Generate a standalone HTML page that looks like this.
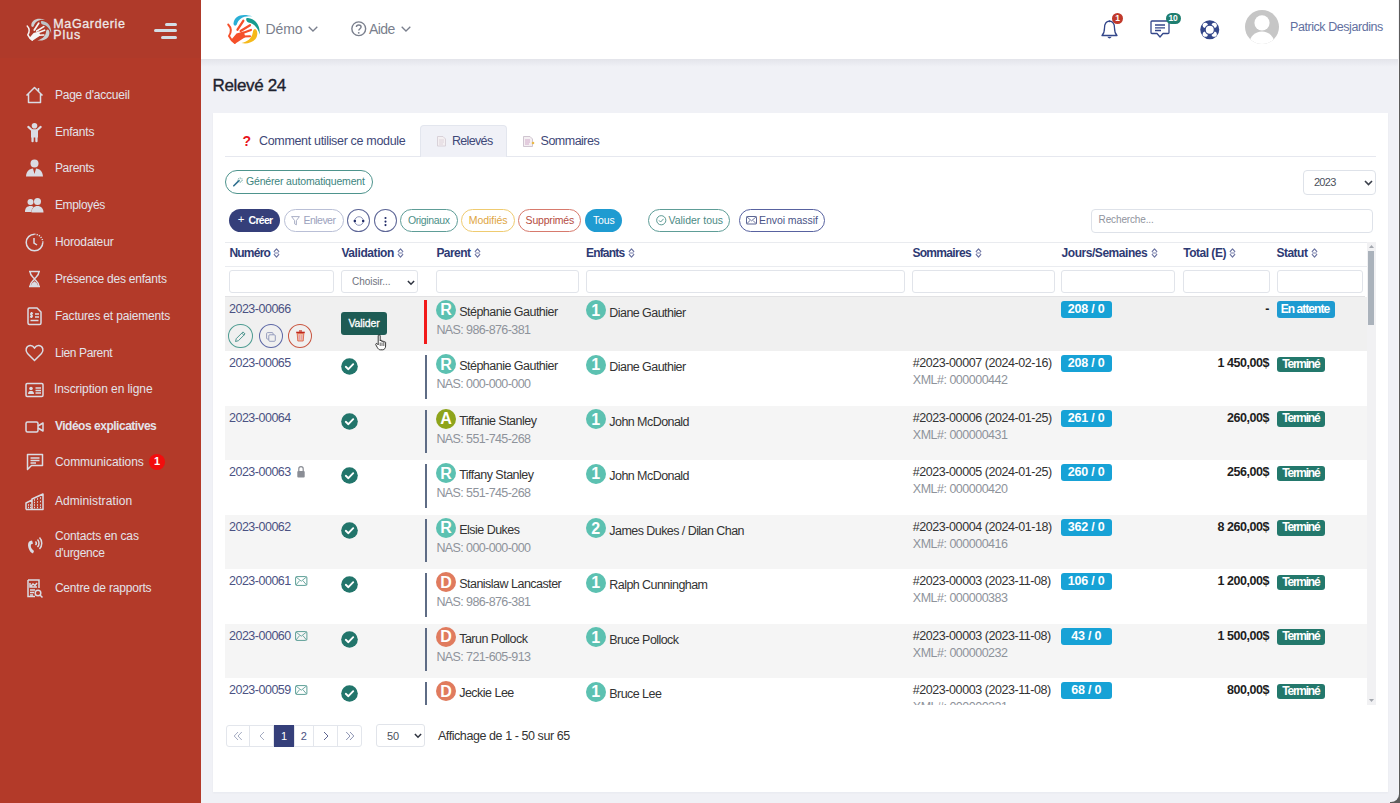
<!DOCTYPE html><html><head><meta charset="utf-8"><style>
html,body{margin:0;padding:0;}
body{width:1400px;height:803px;overflow:hidden;position:relative;background:#F0F1F6;font-family:"Liberation Sans", sans-serif;}
.t{position:absolute;white-space:nowrap;}
.b{position:absolute;box-sizing:border-box;}
svg.b{overflow:visible;}
</style></head><body>
<div class="b" style="left:0.00px;top:0.00px;width:201.00px;height:803.00px;background:#B33A29;"></div>
<div class="b" style="left:0.00px;top:0.00px;width:201.00px;height:58.00px;background:#AF3A2A;"></div>
<svg class="b" style="left:24.10px;top:14.50px" width="30.5" height="27.5"><g transform="scale(0.763)">
<path d="M9.5 13.5 C10 6 18 2.8 28.5 6.5 C20 5.2 14.5 8.5 12.8 14.5 C12 16.3 9.5 16 9.5 13.5 Z" fill="#CDD0D2"/>
<path d="M22.2 9.5 C21.8 8.3 23 7.8 24 8 C31 8.8 36.5 15 35.6 24.5 C34.5 18.5 30 13.5 24.5 12.5 C23 12.2 22.4 10.8 22.2 9.5 Z" fill="#BCC3C6"/>
<path d="M31 19 C33.5 19.5 34.5 25 31.5 29 C28 33 22 34.2 17.5 33 C23 32 27.8 28.5 28.8 22.5 C29 20.5 29.8 19 31 19 Z" fill="#CDD0D2"/>
<g stroke="#F6F6F6" stroke-linecap="round" fill="none"><path d="M13.5 19.7 L19.3 10.8" stroke-width="2.3"/><path d="M16.6 21 L26 15.2" stroke-width="2.2"/><path d="M18 23.2 L27 19.9" stroke-width="2.1"/><path d="M18.8 26.6 L26 26.2" stroke-width="2"/><path d="M4.2 14.5 C7.5 18 7.5 22 5 26 C6.5 29 8.5 31.5 10.8 33" stroke-width="1.9"/></g>
<path d="M12.5 23.5 L19.5 21.5 L21.5 27 L11 33.8 L7 30 Z" fill="#F6F6F6"/>
</g></svg>
<div class="t" style="left:53.30px;top:18.02px;font-size:12.5px;line-height:12.5px;color:#EEE8E8;font-weight:400;letter-spacing:0.628px;-webkit-text-stroke:0.3px #EEE8E8;">MaGarderie</div>
<div class="t" style="left:53.30px;top:28.72px;font-size:12.5px;line-height:12.5px;color:#EEE8E8;font-weight:400;letter-spacing:0.878px;-webkit-text-stroke:0.3px #EEE8E8;">Plus</div>
<div class="b" style="left:165.00px;top:22.50px;width:11.50px;height:3.00px;background:#D3DEE6;border-radius:2px;"></div>
<div class="b" style="left:154.00px;top:29.00px;width:22.50px;height:3.00px;background:#D3DEE6;border-radius:2px;"></div>
<div class="b" style="left:160.50px;top:36.00px;width:16.00px;height:3.00px;background:#D3DEE6;border-radius:2px;"></div>
<div class="t" style="left:54.90px;top:88.64px;font-size:12px;line-height:12px;color:#E3E3EA;font-weight:400;letter-spacing:-0.209px;">Page d'accueil</div>
<div class="t" style="left:54.90px;top:125.54px;font-size:12px;line-height:12px;color:#E3E3EA;font-weight:400;letter-spacing:-0.182px;">Enfants</div>
<div class="t" style="left:54.90px;top:162.14px;font-size:12px;line-height:12px;color:#E3E3EA;font-weight:400;letter-spacing:-0.293px;">Parents</div>
<div class="t" style="left:54.90px;top:199.04px;font-size:12px;line-height:12px;color:#E3E3EA;font-weight:400;letter-spacing:-0.327px;">Employés</div>
<div class="t" style="left:54.90px;top:236.14px;font-size:12px;line-height:12px;color:#E3E3EA;font-weight:400;letter-spacing:-0.138px;">Horodateur</div>
<div class="t" style="left:54.90px;top:273.14px;font-size:12px;line-height:12px;color:#E3E3EA;font-weight:400;letter-spacing:-0.214px;">Présence des enfants</div>
<div class="t" style="left:54.90px;top:310.14px;font-size:12px;line-height:12px;color:#E3E3EA;font-weight:400;letter-spacing:-0.171px;">Factures et paiements</div>
<div class="t" style="left:54.90px;top:346.74px;font-size:12px;line-height:12px;color:#E3E3EA;font-weight:400;letter-spacing:-0.374px;">Lien Parent</div>
<div class="t" style="left:53.90px;top:383.44px;font-size:12px;line-height:12px;color:#E3E3EA;font-weight:400;letter-spacing:-0.073px;">Inscription en ligne</div>
<div class="t" style="left:54.90px;top:420.44px;font-size:12px;line-height:12px;color:#E3E3EA;font-weight:700;letter-spacing:-0.48px;">Vidéos explicatives</div>
<div class="t" style="left:54.90px;top:455.64px;font-size:12px;line-height:12px;color:#E3E3EA;font-weight:400;letter-spacing:-0.036px;">Communications</div>
<div class="t" style="left:54.90px;top:495.24px;font-size:12px;line-height:12px;color:#E3E3EA;font-weight:400;letter-spacing:0.088px;">Administration</div>
<div class="t" style="left:54.90px;top:529.84px;font-size:12px;line-height:12px;color:#E3E3EA;font-weight:400;letter-spacing:-0.146px;">Contacts en cas</div>
<div class="t" style="left:54.90px;top:582.14px;font-size:12px;line-height:12px;color:#E3E3EA;font-weight:400;letter-spacing:-0.197px;">Centre de rapports</div>
<div class="t" style="left:54.90px;top:547.24px;font-size:12px;line-height:12px;color:#E3E3EA;font-weight:400;letter-spacing:-0.295px;">d'urgence</div>
<div class="b" style="left:149.00px;top:453.50px;width:16.00px;height:16.00px;background:#F20D0D;border-radius:50%;"></div>
<div class="t" style="left:149.00px;top:456.19px;font-size:11px;line-height:11px;color:#fff;font-weight:700;letter-spacing:0px;width:16px;text-align:center;">1</div>
<svg class="b" style="left:25.00px;top:85.50px;" width="19" height="18" viewBox="0 0 19 18"><path d="M1.5 9.5 L9.5 1.5 L17.5 9.5 M3.5 8 V16.5 H15.5 V8" stroke="#DADCE4" fill="none" stroke-width="1.5" stroke-linejoin="round"/><path d="M13.5 2 V5" stroke="#DADCE4" fill="none" stroke-width="1.5"/></svg>
<svg class="b" style="left:25.00px;top:121.50px;" width="19" height="22" viewBox="0 0 19 22"><circle cx="9.5" cy="3.7" r="2.8" fill="#DADCE4"/><path d="M3.3 4.9 L7 8.2 M15.7 4.9 L12 8.2" stroke="#DADCE4" stroke-width="2.1" stroke-linecap="round"/><path d="M6 7.2 H13 V15 Q13 15.8 12.6 15.8 V19.2 Q12.6 20.2 11.5 20.2 Q10.3 20.2 10.3 19.2 V15.6 H8.7 V19.2 Q8.7 20.2 7.5 20.2 Q6.4 20.2 6.4 19.2 V15.8 Q6 15.8 6 15 Z" fill="#DADCE4"/></svg>
<svg class="b" style="left:25.00px;top:159.00px;" width="19" height="18" viewBox="0 0 19 18"><circle cx="9.5" cy="4.5" r="4" fill="#DADCE4"/><path d="M1 17.5 C1.5 12 4 10 8 9.5 L9.5 15 L11 9.5 C15 10 17.5 12 18 17.5 Z" fill="#DADCE4"/></svg>
<svg class="b" style="left:25.00px;top:196.00px;" width="19" height="18" viewBox="0 0 19 18"><circle cx="5.5" cy="6" r="3" fill="#DADCE4"/><circle cx="12.5" cy="5.5" r="3.5" fill="#DADCE4"/><path d="M0 16 C0 12 2 10 5.5 10 C7 10 8 10.5 8.5 11 C7 12.5 6.5 14 6.5 16 Z" fill="#DADCE4"/><path d="M6.5 16.5 C6.5 12.5 9 10 12.5 10 C16 10 18.5 12.5 18.5 16.5 Z" fill="#DADCE4"/></svg>
<svg class="b" style="left:25.00px;top:233.00px;" width="19" height="19" viewBox="0 0 19 19"><path d="M9.5 1.2 A8.3 8.3 0 1 0 17.8 9.5" stroke="#DADCE4" fill="none" stroke-width="1.5"/><path d="M17.8 9.5 A8.3 8.3 0 0 0 9.5 1.2" stroke="#DADCE4" fill="none" stroke-width="1.5" stroke-dasharray="1.2 1.2"/><path d="M9 5 V10 L12 12" stroke="#DADCE4" fill="none" stroke-width="1.5"/></svg>
<svg class="b" style="left:27.00px;top:270.00px;" width="15" height="18" viewBox="0 0 15 18"><path d="M2 1.5 H13 M2 16.5 H13 M3 1.5 C3 6 7 7.5 7.5 9 C7 10.5 3 12 3 16.5 M12 1.5 C12 6 8 7.5 7.5 9 C8 10.5 12 12 12 16.5" stroke="#DADCE4" fill="none" stroke-width="1.5"/><path d="M4 16 C4 13 7.5 12 7.5 11 C7.5 12 11 13 11 16 Z" fill="#DADCE4"/></svg>
<svg class="b" style="left:26.00px;top:307.00px;" width="17" height="18" viewBox="0 0 17 18"><path d="M2.5 1 H11 L15 5 V16 A1.5 1.5 0 0 1 13.5 17.5 H3.5 A1.5 1.5 0 0 1 2 16 V2.5 A1.5 1.5 0 0 1 3.5 1 Z" stroke="#DADCE4" fill="none" stroke-width="1.5"/><path d="M9 7 H13 M9 10 H13 M4.5 13.5 H12.5 M5.5 5 V11 M7 6.5 C5 5.5 4 7 5.5 8 C7 9 6 10.5 4 9.5" stroke="#DADCE4" fill="none" stroke-width="1.5" stroke-width="1.1"/></svg>
<svg class="b" style="left:25.00px;top:343.50px;" width="19" height="18" viewBox="0 0 19 18"><path d="M9.5 16.5 L2.5 9.5 C0 7 0.8 2 5 1.5 C7 1.3 8.5 2.5 9.5 4 C10.5 2.5 12 1.3 14 1.5 C18.2 2 19 7 16.5 9.5 Z" stroke="#DADCE4" fill="none" stroke-width="1.5"/></svg>
<svg class="b" style="left:25.00px;top:381.50px;" width="19" height="16" viewBox="0 0 19 16"><rect x="1" y="1.5" width="17" height="13" rx="1.2" stroke="#DADCE4" fill="none" stroke-width="1.5"/><circle cx="6" cy="6.5" r="1.8" fill="#DADCE4"/><path d="M3 12 C3 9.5 4.5 9 6 9 C7.5 9 9 9.5 9 12 Z" fill="#DADCE4"/><path d="M10.5 6 H16 M10.5 8.5 H16 M10.5 11 H16" stroke="#DADCE4" fill="none" stroke-width="1.5" stroke-width="1.2"/></svg>
<svg class="b" style="left:25.00px;top:418.50px;" width="19" height="16" viewBox="0 0 19 16"><rect x="1" y="3" width="12" height="10" rx="1.5" stroke="#DADCE4" fill="none" stroke-width="1.5"/><path d="M13 7 L18 4 V12 L13 9" stroke="#DADCE4" fill="none" stroke-width="1.5" stroke-linejoin="round"/></svg>
<svg class="b" style="left:26.00px;top:452.50px;" width="18" height="19" viewBox="0 0 18 19"><path d="M1.5 1.5 H16.5 V12.5 H5.5 L1.5 16.5 Z" stroke="#DADCE4" fill="none" stroke-width="1.5" stroke-linejoin="round"/><path d="M4.5 5 H13.5 M4.5 7.5 H13.5 M4.5 10 H10" stroke="#DADCE4" fill="none" stroke-width="1.5" stroke-width="1.2"/></svg>
<svg class="b" style="left:25.00px;top:492.00px;" width="19" height="19" viewBox="0 0 19 19"><path d="M1 17.5 V11 L7 8 V17.5 M7 17.5 V7 L18 2 V17.5 H1" stroke="#DADCE4" fill="none" stroke-width="1.5" stroke-linejoin="round"/><path d="M9 8 H10 M12 7 H13 M15 6 H16 M9 10.5 H10 M12 10 H13 M15 9.5 H16 M9 13 H10 M12 13 H13 M15 13 H16 M9 15.5 H10 M12 15.5 H13 M15 15.5 H16 M3 13 H4 M5 13 H6 M3 15.5 H4 M5 15.5 H6" stroke="#DADCE4" fill="none" stroke-width="1.5" stroke-width="1.3"/></svg>
<svg class="b" style="left:25.00px;top:536.00px;" width="19" height="19" viewBox="0 0 19 19"><path d="M5 5 C3 6 2.5 9 3.5 12 C4.5 15 6 17 8 17.5 L9 15 L7 13 C6 12 5.5 10 6 8.5 L8 7.5 L7 4.5 Z" fill="#DADCE4"/><path d="M10.5 5.5 C11.5 6.5 11.5 8 10.5 9 M12.5 3.5 C14.5 5.5 14.5 9 12.5 11 M14.5 1.5 C17.5 4.5 17.5 10 14.5 13" stroke="#DADCE4" fill="none" stroke-width="1.5" stroke-width="1.2"/></svg>
<svg class="b" style="left:26.00px;top:579.00px;" width="18" height="19" viewBox="0 0 18 19"><path d="M2 1 H13 V9 M2 1 V17.5 H9" stroke="#DADCE4" fill="none" stroke-width="1.5"/><path d="M4 4 V8 H11 M5 7 L7 5 L9 6.5 L11 4" stroke="#DADCE4" fill="none" stroke-width="1.5" stroke-width="1.1"/><path d="M4 11 H9 M4 13.5 H8 M4 16 H7" stroke="#DADCE4" fill="none" stroke-width="1.5" stroke-width="1.1"/><circle cx="12" cy="14" r="2.8" stroke="#DADCE4" fill="none" stroke-width="1.5"/><path d="M14 16 L16.5 18.5" stroke="#DADCE4" fill="none" stroke-width="1.5"/></svg>
<div class="b" style="left:201.00px;top:0.00px;width:1197.00px;height:59.00px;background:#fff;"></div>
<div class="b" style="left:201.00px;top:59.00px;width:1197.00px;height:8.00px;background:linear-gradient(#E3E4EA,#F0F1F6);"></div>
<div class="b" style="left:1398.00px;top:0.00px;width:1.00px;height:803.00px;background:#F4F4F6;"></div>
<div class="b" style="left:1399.00px;top:0.00px;width:1.00px;height:803.00px;background:#5B5B5B;"></div>
<div class="b" style="left:1390.00px;top:794.00px;width:10.00px;height:9.00px;background:#5B5B5B;"></div>
<div class="b" style="left:1389.50px;top:791.60px;width:9.50px;height:10.40px;background:#F0F1F6;border-bottom-right-radius:8px;"></div>
<svg class="b" style="left:224.00px;top:10.00px" width="40.0" height="36.0"><g transform="scale(1.0)">
<path d="M9.5 13.5 C10 6 18 2.8 28.5 6.5 C20 5.2 14.5 8.5 12.8 14.5 C12 16.3 9.5 16 9.5 13.5 Z" fill="#2AAFD6"/>
<path d="M22.2 9.5 C21.8 8.3 23 7.8 24 8 C31 8.8 36.5 15 35.6 24.5 C34.5 18.5 30 13.5 24.5 12.5 C23 12.2 22.4 10.8 22.2 9.5 Z" fill="#169C8F"/>
<path d="M31 19 C33.5 19.5 34.5 25 31.5 29 C28 33 22 34.2 17.5 33 C23 32 27.8 28.5 28.8 22.5 C29 20.5 29.8 19 31 19 Z" fill="#F5B91A"/>
<g stroke="#F5502A" stroke-linecap="round" fill="none"><path d="M13.5 19.7 L19.3 10.8" stroke-width="2.3"/><path d="M16.6 21 L26 15.2" stroke-width="2.2"/><path d="M18 23.2 L27 19.9" stroke-width="2.1"/><path d="M18.8 26.6 L26 26.2" stroke-width="2"/><path d="M4.2 14.5 C7.5 18 7.5 22 5 26 C6.5 29 8.5 31.5 10.8 33" stroke-width="1.9"/></g>
<path d="M12.5 23.5 L19.5 21.5 L21.5 27 L11 33.8 L7 30 Z" fill="#F5502A"/>
</g></svg>
<div class="t" style="left:265.60px;top:22.35px;font-size:14px;line-height:14px;color:#7A7F8D;font-weight:400;letter-spacing:-0.12px;">Démo</div>
<svg class="b" style="left:308.00px;top:25.50px;" width="10" height="6" viewBox="0 0 10 6"><path d="M0.7 0.7 L5 5 L9.3 0.7" stroke="#7A7F8D" stroke-width="1.3" fill="none"/></svg>
<svg class="b" style="left:351.00px;top:20.50px;" width="15.5" height="15.5" viewBox="0 0 15.5 15.5"><circle cx="7.75" cy="7.75" r="6.9" stroke="#7A7F8D" stroke-width="1.4" fill="none"/><path d="M5.4 6 C5.4 3.3 10.1 3.3 10.1 6 C10.1 7.6 7.75 7.8 7.75 9.6" stroke="#7A7F8D" stroke-width="1.4" fill="none"/><circle cx="7.75" cy="11.8" r="0.9" fill="#7A7F8D"/></svg>
<div class="t" style="left:369.00px;top:22.35px;font-size:14px;line-height:14px;color:#7A7F8D;font-weight:400;letter-spacing:-0.578px;">Aide</div>
<svg class="b" style="left:401.00px;top:25.50px;" width="10" height="6" viewBox="0 0 10 6"><path d="M0.7 0.7 L5 5 L9.3 0.7" stroke="#7A7F8D" stroke-width="1.3" fill="none"/></svg>
<svg class="b" style="left:1101.00px;top:19.50px;" width="17" height="20" viewBox="0 0 17 20"><path d="M8.5 1.2 C4.5 1.5 3.5 5 3.5 8 C3.5 12 2.5 14 1 15.5 H16 C14.5 14 13.5 12 13.5 8 C13.5 5 12.5 1.5 8.5 1.2 Z" stroke="#34478A" stroke-width="1.3" fill="none" stroke-linejoin="round"/><path d="M6.3 16.8 Q8.5 20.3 10.7 16.8 Z" fill="#34478A"/><circle cx="8.5" cy="1.2" r="1" fill="#34478A"/></svg>
<div class="b" style="left:1112.20px;top:13.00px;width:11.00px;height:11.00px;background:#C0392B;border-radius:50%;"></div>
<div class="t" style="left:1112.20px;top:14.40px;font-size:8.5px;line-height:8.5px;color:#fff;font-weight:700;letter-spacing:0px;width:11px;text-align:center;">1</div>
<svg class="b" style="left:1149.50px;top:19.50px;" width="20" height="19" viewBox="0 0 20 19"><path d="M2 1 H18 A1 1 0 0 1 19 2 V12.5 A1 1 0 0 1 18 13.5 H13 L10 17 L7 13.5 H2 A1 1 0 0 1 1 12.5 V2 A1 1 0 0 1 2 1 Z" stroke="#34478A" stroke-width="1.3" fill="none" stroke-linejoin="round"/><path d="M5 5 H15 M5 7.8 H15 M5 10.5 H11" stroke="#34478A" stroke-width="1.3"/></svg>
<div class="b" style="left:1165.50px;top:13.00px;width:15.00px;height:10.50px;background:#1E7E70;border-radius:6px;"></div>
<div class="t" style="left:1165.50px;top:14.30px;font-size:8.5px;line-height:8.5px;color:#fff;font-weight:700;letter-spacing:0px;width:15px;text-align:center;letter-spacing:-0.3px;">10</div>
<svg class="b" style="left:1199.80px;top:19.90px;" width="19.5" height="19.5" viewBox="0 0 19.5 19.5"><circle cx="9.75" cy="9.75" r="9.5" fill="#34478A"/><circle cx="9.75" cy="9.75" r="4.6" fill="#fff"/><g fill="#fff"><circle cx="5.3" cy="5.3" r="2.6"/><circle cx="14.2" cy="5.3" r="2.6"/><circle cx="5.3" cy="14.2" r="2.6"/><circle cx="14.2" cy="14.2" r="2.6"/></g><circle cx="9.75" cy="9.75" r="4.6" fill="none" stroke="#34478A" stroke-width="1.2"/></svg>
<svg class="b" style="left:1245.00px;top:10.30px;" width="34" height="34" viewBox="0 0 34 34"><defs><clipPath id="av"><circle cx="17" cy="17" r="17"/></clipPath></defs><circle cx="17" cy="17" r="17" fill="#C6C6C6"/><g clip-path="url(#av)"><circle cx="17" cy="12.8" r="7.6" fill="#fff"/><ellipse cx="17" cy="33.5" rx="12.5" ry="12" fill="#fff"/></g></svg>
<div class="t" style="left:1290.00px;top:20.52px;font-size:12.5px;line-height:12.5px;color:#6270A0;font-weight:400;letter-spacing:-0.44px;">Patrick Desjardins</div>
<div class="t" style="left:212.50px;top:76.61px;font-size:17px;line-height:17px;color:#1E222E;font-weight:400;letter-spacing:-0.349px;-webkit-text-stroke:0.35px #1E222E;">Relevé 24</div>
<div class="b" style="left:213.00px;top:113.00px;width:1175.30px;height:678.50px;background:#fff;box-shadow:0 1px 2px rgba(30,40,80,0.04);"></div>
<div class="b" style="left:225.00px;top:156.00px;width:1151.00px;height:1.00px;background:#E6E8EF;"></div>
<div class="b" style="left:419.50px;top:125.00px;width:87.00px;height:32.00px;background:#F0F1F7;border:1px solid #E3E6EE;border-bottom:none;border-radius:4px 4px 0 0;"></div>
<div class="t" style="left:242.50px;top:134.15px;font-size:14px;line-height:14px;color:#E8141E;font-weight:700;letter-spacing:0px;">?</div>
<div class="t" style="left:259.00px;top:135.22px;font-size:12.5px;line-height:12.5px;color:#3E4878;font-weight:400;letter-spacing:-0.331px;">Comment utiliser ce module</div>
<svg class="b" style="left:437.00px;top:136.00px;" width="9" height="10.5" viewBox="0 0 9 10.5"><path d="M0.5 0.5 H6 L8.5 3 V10 H0.5 Z" fill="#F4F0F2" stroke="#D6CED6" stroke-width="0.9"/><path d="M2 4 H7 M2 6 H7 M2 8 H6" stroke="#D9CBD6" stroke-width="0.8"/></svg>
<div class="t" style="left:451.90px;top:135.22px;font-size:12.5px;line-height:12.5px;color:#3E4878;font-weight:400;letter-spacing:-0.652px;">Relevés</div>
<svg class="b" style="left:523.00px;top:135.50px;" width="11.5" height="11" viewBox="0 0 11.5 11"><path d="M0.5 0.5 H7 L9.5 3 V10.5 H0.5 Z" fill="#F4EFF2" stroke="#C9BECB" stroke-width="0.9"/><path d="M2 4 H7 M2 6 H7 M2 8 H6" stroke="#C99BBF" stroke-width="0.8"/><circle cx="10" cy="7" r="1.3" fill="#E9B94A"/></svg>
<div class="t" style="left:540.60px;top:135.22px;font-size:12.5px;line-height:12.5px;color:#3E4878;font-weight:400;letter-spacing:-0.52px;">Sommaires</div>
<div class="b" style="left:225.00px;top:170.00px;width:147.60px;height:23.60px;border:1px solid #4E948D;border-radius:12px;"></div>
<svg class="b" style="left:233.00px;top:177.00px;" width="10" height="9.5" viewBox="0 0 10 9.5"><path d="M0.8 8.8 L6 3.6" stroke="#2F6F8F" stroke-width="1.6" stroke-linecap="round"/><path d="M7.2 0.3 V2.2 M7.2 4.2 V6 M4.3 3.2 H6.2 M8.2 3.2 H10 M5.2 1.2 L6 2 M9.2 1.2 L8.4 2 M9.2 5.2 L8.4 4.4" stroke="#6FA8A2" stroke-width="0.8"/></svg>
<div class="t" style="left:246.00px;top:176.31px;font-size:10.5px;line-height:10.5px;color:#3D857E;font-weight:400;letter-spacing:-0.166px;">Générer automatiquement</div>
<div class="b" style="left:1302.70px;top:170.20px;width:73.00px;height:24.50px;border:1px solid #DEE2E9;border-radius:4px;"></div>
<div class="t" style="left:1313.90px;top:176.69px;font-size:11px;line-height:11px;color:#4B505C;font-weight:400;letter-spacing:-0.651px;">2023</div>
<svg class="b" style="left:1363.50px;top:180.00px;" width="9" height="6" viewBox="0 0 9 6"><path d="M1 1 L4.5 4.6 L8 1" stroke="#3B404B" stroke-width="1.6" fill="none"/></svg>
<div class="b" style="left:228.60px;top:208.50px;width:51.40px;height:23.70px;background:#353F7A;border-radius:12px;"></div>
<div class="t" style="left:237.80px;top:213.67px;font-size:11.5px;line-height:11.5px;color:#fff;font-weight:400;letter-spacing:0px;">+</div>
<div class="t" style="left:248.60px;top:214.51px;font-size:10.5px;line-height:10.5px;color:#fff;font-weight:700;letter-spacing:-0.737px;">Créer</div>
<div class="b" style="left:283.60px;top:208.50px;width:60.00px;height:23.70px;border:1px solid #B9BFD6;border-radius:12px;"></div>
<svg class="b" style="left:291.20px;top:215.50px;" width="9" height="9.5" viewBox="0 0 9 9.5"><path d="M0.6 0.6 H8.4 L5.4 4.6 V8.8 L3.6 7.8 V4.6 Z" stroke="#A0A6C0" stroke-width="0.9" fill="none" stroke-linejoin="round"/></svg>
<div class="t" style="left:303.60px;top:214.51px;font-size:10.5px;line-height:10.5px;color:#9CA2BD;font-weight:400;letter-spacing:-0.551px;">Enlever</div>
<div class="b" style="left:347.00px;top:208.50px;width:23.00px;height:23.70px;border:1px solid #5F6898;border-radius:50%;"></div>
<svg class="b" style="left:353.00px;top:215.00px;" width="12" height="12" viewBox="0 0 12 12"><circle cx="6" cy="6" r="4.3" stroke="#8088B0" stroke-width="0.9" fill="none"/><circle cx="1.8" cy="6.1" r="1.25" fill="#1F2A66"/><circle cx="10.2" cy="6.1" r="1.25" fill="#1F2A66"/></svg>
<div class="b" style="left:373.60px;top:208.50px;width:23.40px;height:23.70px;border:1px solid #5F6898;border-radius:50%;"></div>
<svg class="b" style="left:383.80px;top:215.50px;" width="3" height="10" viewBox="0 0 3 10"><circle cx="1.5" cy="2" r="1.05" fill="#1F2A66"/><circle cx="1.5" cy="5.6" r="1.05" fill="#1F2A66"/><circle cx="1.5" cy="9.1" r="1.05" fill="#1F2A66"/></svg>
<div class="b" style="left:399.80px;top:208.50px;width:58.60px;height:23.70px;border:1px solid #5E9D97;border-radius:12px;"></div>
<div class="t" style="left:407.90px;top:214.51px;font-size:10.5px;line-height:10.5px;color:#4C8F88;font-weight:400;letter-spacing:-0.361px;">Originaux</div>
<div class="b" style="left:461.00px;top:208.50px;width:54.00px;height:23.70px;border:1px solid #EFCB70;border-radius:12px;"></div>
<div class="t" style="left:468.70px;top:214.51px;font-size:10.5px;line-height:10.5px;color:#E0A53F;font-weight:400;letter-spacing:-0.035px;">Modifiés</div>
<div class="b" style="left:517.60px;top:208.50px;width:63.90px;height:23.70px;border:1px solid #D77A6D;border-radius:12px;"></div>
<div class="t" style="left:525.60px;top:214.51px;font-size:10.5px;line-height:10.5px;color:#B54C41;font-weight:400;letter-spacing:-0.192px;">Supprimés</div>
<div class="b" style="left:585.00px;top:208.50px;width:36.60px;height:23.70px;background:#1F9BD1;border-radius:12px;"></div>
<div class="t" style="left:593.00px;top:214.51px;font-size:10.5px;line-height:10.5px;color:#fff;font-weight:400;letter-spacing:-0.176px;">Tous</div>
<div class="b" style="left:648.20px;top:208.50px;width:82.30px;height:23.70px;border:1px solid #5E9D97;border-radius:12px;"></div>
<svg class="b" style="left:655.50px;top:215.20px;" width="10.5" height="10.5" viewBox="0 0 10.5 10.5"><circle cx="5.25" cy="5.25" r="4.6" stroke="#4C8F88" stroke-width="0.9" fill="none"/><path d="M3 5.4 L4.6 7 L7.6 3.8" stroke="#4C8F88" stroke-width="0.9" fill="none"/></svg>
<div class="t" style="left:668.50px;top:214.51px;font-size:10.5px;line-height:10.5px;color:#4C8A84;font-weight:400;letter-spacing:-0.011px;">Valider tous</div>
<div class="b" style="left:739.00px;top:208.50px;width:86.00px;height:23.70px;border:1px solid #5862A0;border-radius:12px;"></div>
<svg class="b" style="left:746.30px;top:216.30px;" width="11" height="8.5" viewBox="0 0 11 8.5"><rect x="0.5" y="0.5" width="10" height="7.5" rx="0.8" stroke="#4A5487" stroke-width="0.9" fill="none"/><path d="M0.8 0.8 L5.5 4.8 L10.2 0.8 M0.8 7.7 L4 4.5 M10.2 7.7 L7 4.5" stroke="#4A5487" stroke-width="0.8" fill="none"/></svg>
<div class="t" style="left:759.00px;top:214.51px;font-size:10.5px;line-height:10.5px;color:#4A5487;font-weight:400;letter-spacing:-0.055px;">Envoi massif</div>
<div class="b" style="left:1091.40px;top:208.50px;width:281.30px;height:24.00px;border:1px solid #DEE2E9;border-radius:4px;"></div>
<div class="t" style="left:1098.60px;top:215.13px;font-size:10px;line-height:10px;color:#8F939D;font-weight:400;letter-spacing:-0.138px;">Recherche...</div>
<div class="b" style="left:225px;top:241.5px;width:1150.5px;height:463.5px;overflow:hidden;">
<div class="b" style="left:0.00px;top:0.00px;width:1150.50px;height:1.00px;background:#E9EBEF;"></div>
<div class="t" style="left:4.40px;top:5.94px;font-size:12px;line-height:12px;color:#2E3A73;font-weight:700;letter-spacing:-0.762px;">Numéro</div>
<svg class="b" style="left:48.40px;top:6.40px;" width="7" height="10" viewBox="0 0 7 10"><path d="M0.9 3.9 L3.5 0.9 L6.1 3.9 M0.9 6.1 L3.5 9.1 L6.1 6.1" stroke="#6A72A0" stroke-width="1.15" fill="none" stroke-linejoin="round"/><path d="M1.2 5 H5.8" stroke="#A9AECB" stroke-width="1.6"/></svg>
<div class="t" style="left:116.40px;top:5.94px;font-size:12px;line-height:12px;color:#2E3A73;font-weight:700;letter-spacing:-0.416px;">Validation</div>
<svg class="b" style="left:171.80px;top:6.40px;" width="7" height="10" viewBox="0 0 7 10"><path d="M0.9 3.9 L3.5 0.9 L6.1 3.9 M0.9 6.1 L3.5 9.1 L6.1 6.1" stroke="#6A72A0" stroke-width="1.15" fill="none" stroke-linejoin="round"/><path d="M1.2 5 H5.8" stroke="#A9AECB" stroke-width="1.6"/></svg>
<div class="t" style="left:211.40px;top:5.94px;font-size:12px;line-height:12px;color:#2E3A73;font-weight:700;letter-spacing:-0.55px;">Parent</div>
<svg class="b" style="left:248.80px;top:6.40px;" width="7" height="10" viewBox="0 0 7 10"><path d="M0.9 3.9 L3.5 0.9 L6.1 3.9 M0.9 6.1 L3.5 9.1 L6.1 6.1" stroke="#6A72A0" stroke-width="1.15" fill="none" stroke-linejoin="round"/><path d="M1.2 5 H5.8" stroke="#A9AECB" stroke-width="1.6"/></svg>
<div class="t" style="left:361.00px;top:5.94px;font-size:12px;line-height:12px;color:#2E3A73;font-weight:700;letter-spacing:-0.822px;">Enfants</div>
<svg class="b" style="left:403.20px;top:6.40px;" width="7" height="10" viewBox="0 0 7 10"><path d="M0.9 3.9 L3.5 0.9 L6.1 3.9 M0.9 6.1 L3.5 9.1 L6.1 6.1" stroke="#6A72A0" stroke-width="1.15" fill="none" stroke-linejoin="round"/><path d="M1.2 5 H5.8" stroke="#A9AECB" stroke-width="1.6"/></svg>
<div class="t" style="left:687.40px;top:5.94px;font-size:12px;line-height:12px;color:#2E3A73;font-weight:700;letter-spacing:-0.678px;">Sommaires</div>
<svg class="b" style="left:749.80px;top:6.40px;" width="7" height="10" viewBox="0 0 7 10"><path d="M0.9 3.9 L3.5 0.9 L6.1 3.9 M0.9 6.1 L3.5 9.1 L6.1 6.1" stroke="#6A72A0" stroke-width="1.15" fill="none" stroke-linejoin="round"/><path d="M1.2 5 H5.8" stroke="#A9AECB" stroke-width="1.6"/></svg>
<div class="t" style="left:836.60px;top:5.94px;font-size:12px;line-height:12px;color:#2E3A73;font-weight:700;letter-spacing:-0.459px;">Jours/Semaines</div>
<svg class="b" style="left:925.80px;top:6.40px;" width="7" height="10" viewBox="0 0 7 10"><path d="M0.9 3.9 L3.5 0.9 L6.1 3.9 M0.9 6.1 L3.5 9.1 L6.1 6.1" stroke="#6A72A0" stroke-width="1.15" fill="none" stroke-linejoin="round"/><path d="M1.2 5 H5.8" stroke="#A9AECB" stroke-width="1.6"/></svg>
<div class="t" style="left:958.20px;top:5.94px;font-size:12px;line-height:12px;color:#2E3A73;font-weight:700;letter-spacing:-0.488px;">Total (E)</div>
<svg class="b" style="left:1004.20px;top:6.40px;" width="7" height="10" viewBox="0 0 7 10"><path d="M0.9 3.9 L3.5 0.9 L6.1 3.9 M0.9 6.1 L3.5 9.1 L6.1 6.1" stroke="#6A72A0" stroke-width="1.15" fill="none" stroke-linejoin="round"/><path d="M1.2 5 H5.8" stroke="#A9AECB" stroke-width="1.6"/></svg>
<div class="t" style="left:1051.50px;top:5.94px;font-size:12px;line-height:12px;color:#2E3A73;font-weight:700;letter-spacing:-0.52px;">Statut</div>
<svg class="b" style="left:1085.70px;top:6.40px;" width="7" height="10" viewBox="0 0 7 10"><path d="M0.9 3.9 L3.5 0.9 L6.1 3.9 M0.9 6.1 L3.5 9.1 L6.1 6.1" stroke="#6A72A0" stroke-width="1.15" fill="none" stroke-linejoin="round"/><path d="M1.2 5 H5.8" stroke="#A9AECB" stroke-width="1.6"/></svg>
<div class="b" style="left:0.00px;top:24.00px;width:1142.50px;height:1.00px;background:#EAECF0;"></div>
<div class="b" style="left:4.00px;top:28.50px;width:104.50px;height:23.00px;border:1px solid #E1E4EA;border-radius:3px;"></div>
<div class="b" style="left:211.40px;top:28.50px;width:142.20px;height:23.00px;border:1px solid #E1E4EA;border-radius:3px;"></div>
<div class="b" style="left:360.60px;top:28.50px;width:319.80px;height:23.00px;border:1px solid #E1E4EA;border-radius:3px;"></div>
<div class="b" style="left:687.40px;top:28.50px;width:142.20px;height:23.00px;border:1px solid #E1E4EA;border-radius:3px;"></div>
<div class="b" style="left:836.20px;top:28.50px;width:114.30px;height:23.00px;border:1px solid #E1E4EA;border-radius:3px;"></div>
<div class="b" style="left:957.70px;top:28.50px;width:86.90px;height:23.00px;border:1px solid #E1E4EA;border-radius:3px;"></div>
<div class="b" style="left:1051.50px;top:28.50px;width:86.10px;height:23.00px;border:1px solid #E1E4EA;border-radius:3px;"></div>
<div class="b" style="left:116.00px;top:28.50px;width:76.70px;height:23.00px;border:1px solid #E1E4EA;border-radius:3px;"></div>
<div class="t" style="left:127.00px;top:35.03px;font-size:10px;line-height:10px;color:#6F737D;font-weight:400;letter-spacing:-0.047px;">Choisir...</div>
<svg class="b" style="left:181.50px;top:38.00px;" width="8" height="5.5" viewBox="0 0 8 5.5"><path d="M0.9 0.9 L4 4.2 L7.1 0.9" stroke="#2F3440" stroke-width="1.5" fill="none"/></svg>
<div class="b" style="left:0.00px;top:55.00px;width:1141.50px;height:54.50px;background:#F0F0F0;"></div>
<div class="t" style="left:4.00px;top:61.32px;font-size:12.5px;line-height:12.5px;color:#4B5283;font-weight:400;letter-spacing:-0.498px;">2023-00066</div>
<div class="b" style="left:199.00px;top:58.70px;width:3.00px;height:44.30px;background:#F21A1A;"></div>
<div class="b" style="left:211.00px;top:58.20px;width:20.20px;height:20.20px;background:#5CC1B1;border-radius:50%;"></div>
<div class="t" style="left:211.00px;top:60.76px;font-size:16px;line-height:16px;color:#fff;font-weight:700;letter-spacing:0px;width:20.2px;text-align:center;">R</div>
<div class="t" style="left:234.20px;top:64.02px;font-size:12.5px;line-height:12.5px;color:#333;font-weight:400;letter-spacing:-0.515px;">Stéphanie Gauthier</div>
<div class="t" style="left:211.40px;top:82.02px;font-size:12.5px;line-height:12.5px;color:#8E939B;font-weight:400;letter-spacing:-0.599px;">NAS: 986-876-381</div>
<div class="b" style="left:360.70px;top:58.70px;width:20.00px;height:20.20px;background:#5CC1B1;border-radius:50%;"></div>
<div class="t" style="left:360.70px;top:61.26px;font-size:16px;line-height:16px;color:#fff;font-weight:700;letter-spacing:0px;width:20px;text-align:center;">1</div>
<div class="t" style="left:384.30px;top:65.02px;font-size:12.5px;line-height:12.5px;color:#333;font-weight:400;letter-spacing:-0.555px;">Diane Gauthier</div>
<div class="b" style="left:836.00px;top:59.00px;width:50.60px;height:17.40px;background:#17A2D6;border-radius:3px;"></div>
<div class="t" style="left:835.89px;top:61.22px;font-size:12.5px;line-height:12.5px;color:#fff;font-weight:700;letter-spacing:0px;width:50.6px;text-align:center;letter-spacing:-0.212px;">208 / 0</div>
<div class="t" style="left:943.94px;top:61.02px;font-size:12.5px;line-height:12.5px;color:#1E1E1E;font-weight:700;letter-spacing:0px;width:100px;text-align:right;letter-spacing:-0.457px;">-</div>
<div class="b" style="left:1051.50px;top:59.70px;width:58.50px;height:16.70px;background:#1E9BD1;border-radius:3px;"></div>
<div class="t" style="left:1055.70px;top:61.24px;font-size:12px;line-height:12px;color:#fff;font-weight:700;letter-spacing:-0.948px;">En attente</div>
<div class="b" style="left:0.00px;top:109.50px;width:1141.50px;height:54.50px;background:#FFFFFF;"></div>
<div class="t" style="left:4.00px;top:115.82px;font-size:12.5px;line-height:12.5px;color:#4B5283;font-weight:400;letter-spacing:-0.498px;">2023-00065</div>
<svg class="b" style="left:116.20px;top:116.50px;" width="17" height="17" viewBox="0 0 17 17"><circle cx="8.5" cy="8.5" r="8.3" fill="#22756B"/><path d="M4.8 8.8 L7.4 11.2 L12.2 6.2" stroke="#fff" stroke-width="1.9" fill="none" stroke-linecap="round" stroke-linejoin="round"/></svg>
<div class="b" style="left:199.80px;top:113.50px;width:2.40px;height:43.60px;background:#5E6C85;"></div>
<div class="b" style="left:211.00px;top:112.70px;width:20.20px;height:20.20px;background:#5CC1B1;border-radius:50%;"></div>
<div class="t" style="left:211.00px;top:115.26px;font-size:16px;line-height:16px;color:#fff;font-weight:700;letter-spacing:0px;width:20.2px;text-align:center;">R</div>
<div class="t" style="left:234.20px;top:118.52px;font-size:12.5px;line-height:12.5px;color:#333;font-weight:400;letter-spacing:-0.515px;">Stéphanie Gauthier</div>
<div class="t" style="left:211.40px;top:136.52px;font-size:12.5px;line-height:12.5px;color:#8E939B;font-weight:400;letter-spacing:-0.599px;">NAS: 000-000-000</div>
<div class="b" style="left:360.70px;top:113.20px;width:20.00px;height:20.20px;background:#5CC1B1;border-radius:50%;"></div>
<div class="t" style="left:360.70px;top:115.76px;font-size:16px;line-height:16px;color:#fff;font-weight:700;letter-spacing:0px;width:20px;text-align:center;">1</div>
<div class="t" style="left:384.30px;top:119.52px;font-size:12.5px;line-height:12.5px;color:#333;font-weight:400;letter-spacing:-0.555px;">Diane Gauthier</div>
<div class="t" style="left:687.80px;top:115.72px;font-size:12.5px;line-height:12.5px;color:#333;font-weight:400;letter-spacing:-0.437px;">#2023-00007 (2024-02-16)</div>
<div class="t" style="left:687.80px;top:132.82px;font-size:12.5px;line-height:12.5px;color:#8E939B;font-weight:400;letter-spacing:-0.501px;">XML#: 000000442</div>
<div class="b" style="left:836.00px;top:113.50px;width:50.60px;height:17.40px;background:#17A2D6;border-radius:3px;"></div>
<div class="t" style="left:835.89px;top:115.72px;font-size:12.5px;line-height:12.5px;color:#fff;font-weight:700;letter-spacing:0px;width:50.6px;text-align:center;letter-spacing:-0.212px;">208 / 0</div>
<div class="t" style="left:943.94px;top:115.52px;font-size:12.5px;line-height:12.5px;color:#1E1E1E;font-weight:700;letter-spacing:0px;width:100px;text-align:right;letter-spacing:-0.457px;">1 450,00$</div>
<div class="b" style="left:1051.90px;top:115.00px;width:48.50px;height:15.70px;background:#23786C;border-radius:3px;"></div>
<div class="t" style="left:1057.30px;top:116.34px;font-size:12px;line-height:12px;color:#fff;font-weight:700;letter-spacing:-1.253px;">Terminé</div>
<div class="b" style="left:0.00px;top:164.00px;width:1141.50px;height:54.50px;background:#F5F5F5;"></div>
<div class="t" style="left:4.00px;top:170.32px;font-size:12.5px;line-height:12.5px;color:#4B5283;font-weight:400;letter-spacing:-0.498px;">2023-00064</div>
<svg class="b" style="left:116.20px;top:171.00px;" width="17" height="17" viewBox="0 0 17 17"><circle cx="8.5" cy="8.5" r="8.3" fill="#22756B"/><path d="M4.8 8.8 L7.4 11.2 L12.2 6.2" stroke="#fff" stroke-width="1.9" fill="none" stroke-linecap="round" stroke-linejoin="round"/></svg>
<div class="b" style="left:199.80px;top:168.00px;width:2.40px;height:43.60px;background:#5E6C85;"></div>
<div class="b" style="left:211.00px;top:167.20px;width:20.20px;height:20.20px;background:#8EA41B;border-radius:50%;"></div>
<div class="t" style="left:211.00px;top:169.76px;font-size:16px;line-height:16px;color:#fff;font-weight:700;letter-spacing:0px;width:20.2px;text-align:center;">A</div>
<div class="t" style="left:234.20px;top:173.02px;font-size:12.5px;line-height:12.5px;color:#333;font-weight:400;letter-spacing:-0.515px;">Tiffanie Stanley</div>
<div class="t" style="left:211.40px;top:191.02px;font-size:12.5px;line-height:12.5px;color:#8E939B;font-weight:400;letter-spacing:-0.599px;">NAS: 551-745-268</div>
<div class="b" style="left:360.70px;top:167.70px;width:20.00px;height:20.20px;background:#5CC1B1;border-radius:50%;"></div>
<div class="t" style="left:360.70px;top:170.26px;font-size:16px;line-height:16px;color:#fff;font-weight:700;letter-spacing:0px;width:20px;text-align:center;">1</div>
<div class="t" style="left:384.30px;top:174.02px;font-size:12.5px;line-height:12.5px;color:#333;font-weight:400;letter-spacing:-0.555px;">John McDonald</div>
<div class="t" style="left:687.80px;top:170.22px;font-size:12.5px;line-height:12.5px;color:#333;font-weight:400;letter-spacing:-0.437px;">#2023-00006 (2024-01-25)</div>
<div class="t" style="left:687.80px;top:187.32px;font-size:12.5px;line-height:12.5px;color:#8E939B;font-weight:400;letter-spacing:-0.501px;">XML#: 000000431</div>
<div class="b" style="left:836.00px;top:168.00px;width:50.60px;height:17.40px;background:#17A2D6;border-radius:3px;"></div>
<div class="t" style="left:835.89px;top:170.22px;font-size:12.5px;line-height:12.5px;color:#fff;font-weight:700;letter-spacing:0px;width:50.6px;text-align:center;letter-spacing:-0.212px;">261 / 0</div>
<div class="t" style="left:943.94px;top:170.02px;font-size:12.5px;line-height:12.5px;color:#1E1E1E;font-weight:700;letter-spacing:0px;width:100px;text-align:right;letter-spacing:-0.457px;">260,00$</div>
<div class="b" style="left:1051.90px;top:169.50px;width:48.50px;height:15.70px;background:#23786C;border-radius:3px;"></div>
<div class="t" style="left:1057.30px;top:170.84px;font-size:12px;line-height:12px;color:#fff;font-weight:700;letter-spacing:-1.253px;">Terminé</div>
<div class="b" style="left:0.00px;top:218.50px;width:1141.50px;height:54.50px;background:#FFFFFF;"></div>
<div class="t" style="left:4.00px;top:224.82px;font-size:12.5px;line-height:12.5px;color:#4B5283;font-weight:400;letter-spacing:-0.498px;">2023-00063</div>
<svg class="b" style="left:71.50px;top:223.00px;" width="8" height="13" viewBox="0 0 8 13"><path d="M1.8 6 V3.8 A2.2 2.2 0 0 1 6.2 3.8 V6" stroke="#8A8D95" stroke-width="1.2" fill="none"/><rect x="0.3" y="6" width="7.4" height="6.5" rx="1" fill="#8A8D95"/></svg>
<svg class="b" style="left:116.20px;top:225.50px;" width="17" height="17" viewBox="0 0 17 17"><circle cx="8.5" cy="8.5" r="8.3" fill="#22756B"/><path d="M4.8 8.8 L7.4 11.2 L12.2 6.2" stroke="#fff" stroke-width="1.9" fill="none" stroke-linecap="round" stroke-linejoin="round"/></svg>
<div class="b" style="left:199.80px;top:222.50px;width:2.40px;height:43.60px;background:#5E6C85;"></div>
<div class="b" style="left:211.00px;top:221.70px;width:20.20px;height:20.20px;background:#5CC1B1;border-radius:50%;"></div>
<div class="t" style="left:211.00px;top:224.26px;font-size:16px;line-height:16px;color:#fff;font-weight:700;letter-spacing:0px;width:20.2px;text-align:center;">R</div>
<div class="t" style="left:234.20px;top:227.52px;font-size:12.5px;line-height:12.5px;color:#333;font-weight:400;letter-spacing:-0.515px;">Tiffany Stanley</div>
<div class="t" style="left:211.40px;top:245.52px;font-size:12.5px;line-height:12.5px;color:#8E939B;font-weight:400;letter-spacing:-0.599px;">NAS: 551-745-268</div>
<div class="b" style="left:360.70px;top:222.20px;width:20.00px;height:20.20px;background:#5CC1B1;border-radius:50%;"></div>
<div class="t" style="left:360.70px;top:224.76px;font-size:16px;line-height:16px;color:#fff;font-weight:700;letter-spacing:0px;width:20px;text-align:center;">1</div>
<div class="t" style="left:384.30px;top:228.52px;font-size:12.5px;line-height:12.5px;color:#333;font-weight:400;letter-spacing:-0.555px;">John McDonald</div>
<div class="t" style="left:687.80px;top:224.72px;font-size:12.5px;line-height:12.5px;color:#333;font-weight:400;letter-spacing:-0.437px;">#2023-00005 (2024-01-25)</div>
<div class="t" style="left:687.80px;top:241.82px;font-size:12.5px;line-height:12.5px;color:#8E939B;font-weight:400;letter-spacing:-0.501px;">XML#: 000000420</div>
<div class="b" style="left:836.00px;top:222.50px;width:50.60px;height:17.40px;background:#17A2D6;border-radius:3px;"></div>
<div class="t" style="left:835.89px;top:224.72px;font-size:12.5px;line-height:12.5px;color:#fff;font-weight:700;letter-spacing:0px;width:50.6px;text-align:center;letter-spacing:-0.212px;">260 / 0</div>
<div class="t" style="left:943.94px;top:224.52px;font-size:12.5px;line-height:12.5px;color:#1E1E1E;font-weight:700;letter-spacing:0px;width:100px;text-align:right;letter-spacing:-0.457px;">256,00$</div>
<div class="b" style="left:1051.90px;top:224.00px;width:48.50px;height:15.70px;background:#23786C;border-radius:3px;"></div>
<div class="t" style="left:1057.30px;top:225.34px;font-size:12px;line-height:12px;color:#fff;font-weight:700;letter-spacing:-1.253px;">Terminé</div>
<div class="b" style="left:0.00px;top:273.00px;width:1141.50px;height:54.50px;background:#F5F5F5;"></div>
<div class="t" style="left:4.00px;top:279.32px;font-size:12.5px;line-height:12.5px;color:#4B5283;font-weight:400;letter-spacing:-0.498px;">2023-00062</div>
<svg class="b" style="left:116.20px;top:280.00px;" width="17" height="17" viewBox="0 0 17 17"><circle cx="8.5" cy="8.5" r="8.3" fill="#22756B"/><path d="M4.8 8.8 L7.4 11.2 L12.2 6.2" stroke="#fff" stroke-width="1.9" fill="none" stroke-linecap="round" stroke-linejoin="round"/></svg>
<div class="b" style="left:199.80px;top:277.00px;width:2.40px;height:43.60px;background:#5E6C85;"></div>
<div class="b" style="left:211.00px;top:276.20px;width:20.20px;height:20.20px;background:#5CC1B1;border-radius:50%;"></div>
<div class="t" style="left:211.00px;top:278.76px;font-size:16px;line-height:16px;color:#fff;font-weight:700;letter-spacing:0px;width:20.2px;text-align:center;">R</div>
<div class="t" style="left:234.20px;top:282.02px;font-size:12.5px;line-height:12.5px;color:#333;font-weight:400;letter-spacing:-0.515px;">Elsie Dukes</div>
<div class="t" style="left:211.40px;top:300.02px;font-size:12.5px;line-height:12.5px;color:#8E939B;font-weight:400;letter-spacing:-0.599px;">NAS: 000-000-000</div>
<div class="b" style="left:360.70px;top:276.70px;width:20.00px;height:20.20px;background:#5CC1B1;border-radius:50%;"></div>
<div class="t" style="left:360.70px;top:279.26px;font-size:16px;line-height:16px;color:#fff;font-weight:700;letter-spacing:0px;width:20px;text-align:center;">2</div>
<div class="t" style="left:384.30px;top:283.02px;font-size:12.5px;line-height:12.5px;color:#333;font-weight:400;letter-spacing:-0.555px;">James Dukes / Dilan Chan</div>
<div class="t" style="left:687.80px;top:279.22px;font-size:12.5px;line-height:12.5px;color:#333;font-weight:400;letter-spacing:-0.437px;">#2023-00004 (2024-01-18)</div>
<div class="t" style="left:687.80px;top:296.32px;font-size:12.5px;line-height:12.5px;color:#8E939B;font-weight:400;letter-spacing:-0.501px;">XML#: 000000416</div>
<div class="b" style="left:836.00px;top:277.00px;width:50.60px;height:17.40px;background:#17A2D6;border-radius:3px;"></div>
<div class="t" style="left:835.89px;top:279.22px;font-size:12.5px;line-height:12.5px;color:#fff;font-weight:700;letter-spacing:0px;width:50.6px;text-align:center;letter-spacing:-0.212px;">362 / 0</div>
<div class="t" style="left:943.94px;top:279.02px;font-size:12.5px;line-height:12.5px;color:#1E1E1E;font-weight:700;letter-spacing:0px;width:100px;text-align:right;letter-spacing:-0.457px;">8 260,00$</div>
<div class="b" style="left:1051.90px;top:278.50px;width:48.50px;height:15.70px;background:#23786C;border-radius:3px;"></div>
<div class="t" style="left:1057.30px;top:279.84px;font-size:12px;line-height:12px;color:#fff;font-weight:700;letter-spacing:-1.253px;">Terminé</div>
<div class="b" style="left:0.00px;top:327.50px;width:1141.50px;height:54.50px;background:#FFFFFF;"></div>
<div class="t" style="left:4.00px;top:333.82px;font-size:12.5px;line-height:12.5px;color:#4B5283;font-weight:400;letter-spacing:-0.498px;">2023-00061</div>
<svg class="b" style="left:69.50px;top:334.50px;" width="12.5" height="10" viewBox="0 0 12.5 10"><rect x="0.6" y="0.6" width="11.3" height="8.8" rx="1.2" stroke="#5C9E96" stroke-width="1" fill="none"/><path d="M0.9 0.9 L6.25 5.2 L11.6 0.9 M0.9 9.1 L4.6 4.6 M11.6 9.1 L7.9 4.6" stroke="#5C9E96" stroke-width="0.9" fill="none"/></svg>
<svg class="b" style="left:116.20px;top:334.50px;" width="17" height="17" viewBox="0 0 17 17"><circle cx="8.5" cy="8.5" r="8.3" fill="#22756B"/><path d="M4.8 8.8 L7.4 11.2 L12.2 6.2" stroke="#fff" stroke-width="1.9" fill="none" stroke-linecap="round" stroke-linejoin="round"/></svg>
<div class="b" style="left:199.80px;top:331.50px;width:2.40px;height:43.60px;background:#5E6C85;"></div>
<div class="b" style="left:211.00px;top:330.70px;width:20.20px;height:20.20px;background:#E07B5E;border-radius:50%;"></div>
<div class="t" style="left:211.00px;top:333.26px;font-size:16px;line-height:16px;color:#fff;font-weight:700;letter-spacing:0px;width:20.2px;text-align:center;">D</div>
<div class="t" style="left:234.20px;top:336.52px;font-size:12.5px;line-height:12.5px;color:#333;font-weight:400;letter-spacing:-0.515px;">Stanislaw Lancaster</div>
<div class="t" style="left:211.40px;top:354.52px;font-size:12.5px;line-height:12.5px;color:#8E939B;font-weight:400;letter-spacing:-0.599px;">NAS: 986-876-381</div>
<div class="b" style="left:360.70px;top:331.20px;width:20.00px;height:20.20px;background:#5CC1B1;border-radius:50%;"></div>
<div class="t" style="left:360.70px;top:333.76px;font-size:16px;line-height:16px;color:#fff;font-weight:700;letter-spacing:0px;width:20px;text-align:center;">1</div>
<div class="t" style="left:384.30px;top:337.52px;font-size:12.5px;line-height:12.5px;color:#333;font-weight:400;letter-spacing:-0.555px;">Ralph Cunningham</div>
<div class="t" style="left:687.80px;top:333.72px;font-size:12.5px;line-height:12.5px;color:#333;font-weight:400;letter-spacing:-0.437px;">#2023-00003 (2023-11-08)</div>
<div class="t" style="left:687.80px;top:350.82px;font-size:12.5px;line-height:12.5px;color:#8E939B;font-weight:400;letter-spacing:-0.501px;">XML#: 000000383</div>
<div class="b" style="left:836.00px;top:331.50px;width:50.60px;height:17.40px;background:#17A2D6;border-radius:3px;"></div>
<div class="t" style="left:835.89px;top:333.72px;font-size:12.5px;line-height:12.5px;color:#fff;font-weight:700;letter-spacing:0px;width:50.6px;text-align:center;letter-spacing:-0.212px;">106 / 0</div>
<div class="t" style="left:943.94px;top:333.52px;font-size:12.5px;line-height:12.5px;color:#1E1E1E;font-weight:700;letter-spacing:0px;width:100px;text-align:right;letter-spacing:-0.457px;">1 200,00$</div>
<div class="b" style="left:1051.90px;top:333.00px;width:48.50px;height:15.70px;background:#23786C;border-radius:3px;"></div>
<div class="t" style="left:1057.30px;top:334.34px;font-size:12px;line-height:12px;color:#fff;font-weight:700;letter-spacing:-1.253px;">Terminé</div>
<div class="b" style="left:0.00px;top:382.00px;width:1141.50px;height:54.50px;background:#F5F5F5;"></div>
<div class="t" style="left:4.00px;top:388.32px;font-size:12.5px;line-height:12.5px;color:#4B5283;font-weight:400;letter-spacing:-0.498px;">2023-00060</div>
<svg class="b" style="left:69.50px;top:389.00px;" width="12.5" height="10" viewBox="0 0 12.5 10"><rect x="0.6" y="0.6" width="11.3" height="8.8" rx="1.2" stroke="#5C9E96" stroke-width="1" fill="none"/><path d="M0.9 0.9 L6.25 5.2 L11.6 0.9 M0.9 9.1 L4.6 4.6 M11.6 9.1 L7.9 4.6" stroke="#5C9E96" stroke-width="0.9" fill="none"/></svg>
<svg class="b" style="left:116.20px;top:389.00px;" width="17" height="17" viewBox="0 0 17 17"><circle cx="8.5" cy="8.5" r="8.3" fill="#22756B"/><path d="M4.8 8.8 L7.4 11.2 L12.2 6.2" stroke="#fff" stroke-width="1.9" fill="none" stroke-linecap="round" stroke-linejoin="round"/></svg>
<div class="b" style="left:199.80px;top:386.00px;width:2.40px;height:43.60px;background:#5E6C85;"></div>
<div class="b" style="left:211.00px;top:385.20px;width:20.20px;height:20.20px;background:#E07B5E;border-radius:50%;"></div>
<div class="t" style="left:211.00px;top:387.76px;font-size:16px;line-height:16px;color:#fff;font-weight:700;letter-spacing:0px;width:20.2px;text-align:center;">D</div>
<div class="t" style="left:234.20px;top:391.02px;font-size:12.5px;line-height:12.5px;color:#333;font-weight:400;letter-spacing:-0.515px;">Tarun Pollock</div>
<div class="t" style="left:211.40px;top:409.02px;font-size:12.5px;line-height:12.5px;color:#8E939B;font-weight:400;letter-spacing:-0.599px;">NAS: 721-605-913</div>
<div class="b" style="left:360.70px;top:385.70px;width:20.00px;height:20.20px;background:#5CC1B1;border-radius:50%;"></div>
<div class="t" style="left:360.70px;top:388.26px;font-size:16px;line-height:16px;color:#fff;font-weight:700;letter-spacing:0px;width:20px;text-align:center;">1</div>
<div class="t" style="left:384.30px;top:392.02px;font-size:12.5px;line-height:12.5px;color:#333;font-weight:400;letter-spacing:-0.555px;">Bruce Pollock</div>
<div class="t" style="left:687.80px;top:388.22px;font-size:12.5px;line-height:12.5px;color:#333;font-weight:400;letter-spacing:-0.437px;">#2023-00003 (2023-11-08)</div>
<div class="t" style="left:687.80px;top:405.32px;font-size:12.5px;line-height:12.5px;color:#8E939B;font-weight:400;letter-spacing:-0.501px;">XML#: 000000232</div>
<div class="b" style="left:836.00px;top:386.00px;width:50.60px;height:17.40px;background:#17A2D6;border-radius:3px;"></div>
<div class="t" style="left:835.89px;top:388.22px;font-size:12.5px;line-height:12.5px;color:#fff;font-weight:700;letter-spacing:0px;width:50.6px;text-align:center;letter-spacing:-0.212px;">43 / 0</div>
<div class="t" style="left:943.94px;top:388.02px;font-size:12.5px;line-height:12.5px;color:#1E1E1E;font-weight:700;letter-spacing:0px;width:100px;text-align:right;letter-spacing:-0.457px;">1 500,00$</div>
<div class="b" style="left:1051.90px;top:387.50px;width:48.50px;height:15.70px;background:#23786C;border-radius:3px;"></div>
<div class="t" style="left:1057.30px;top:388.84px;font-size:12px;line-height:12px;color:#fff;font-weight:700;letter-spacing:-1.253px;">Terminé</div>
<div class="b" style="left:0.00px;top:436.50px;width:1141.50px;height:54.50px;background:#FFFFFF;"></div>
<div class="t" style="left:4.00px;top:442.82px;font-size:12.5px;line-height:12.5px;color:#4B5283;font-weight:400;letter-spacing:-0.498px;">2023-00059</div>
<svg class="b" style="left:69.50px;top:443.50px;" width="12.5" height="10" viewBox="0 0 12.5 10"><rect x="0.6" y="0.6" width="11.3" height="8.8" rx="1.2" stroke="#5C9E96" stroke-width="1" fill="none"/><path d="M0.9 0.9 L6.25 5.2 L11.6 0.9 M0.9 9.1 L4.6 4.6 M11.6 9.1 L7.9 4.6" stroke="#5C9E96" stroke-width="0.9" fill="none"/></svg>
<svg class="b" style="left:116.20px;top:443.50px;" width="17" height="17" viewBox="0 0 17 17"><circle cx="8.5" cy="8.5" r="8.3" fill="#22756B"/><path d="M4.8 8.8 L7.4 11.2 L12.2 6.2" stroke="#fff" stroke-width="1.9" fill="none" stroke-linecap="round" stroke-linejoin="round"/></svg>
<div class="b" style="left:199.80px;top:440.50px;width:2.40px;height:43.60px;background:#5E6C85;"></div>
<div class="b" style="left:211.00px;top:439.70px;width:20.20px;height:20.20px;background:#E07B5E;border-radius:50%;"></div>
<div class="t" style="left:211.00px;top:442.26px;font-size:16px;line-height:16px;color:#fff;font-weight:700;letter-spacing:0px;width:20.2px;text-align:center;">D</div>
<div class="t" style="left:234.20px;top:445.52px;font-size:12.5px;line-height:12.5px;color:#333;font-weight:400;letter-spacing:-0.515px;">Jeckie Lee</div>
<div class="t" style="left:211.40px;top:463.52px;font-size:12.5px;line-height:12.5px;color:#8E939B;font-weight:400;letter-spacing:-0.599px;">NAS: 985-876-381</div>
<div class="b" style="left:360.70px;top:440.20px;width:20.00px;height:20.20px;background:#5CC1B1;border-radius:50%;"></div>
<div class="t" style="left:360.70px;top:442.76px;font-size:16px;line-height:16px;color:#fff;font-weight:700;letter-spacing:0px;width:20px;text-align:center;">1</div>
<div class="t" style="left:384.30px;top:446.52px;font-size:12.5px;line-height:12.5px;color:#333;font-weight:400;letter-spacing:-0.555px;">Bruce Lee</div>
<div class="t" style="left:687.80px;top:442.72px;font-size:12.5px;line-height:12.5px;color:#333;font-weight:400;letter-spacing:-0.437px;">#2023-00003 (2023-11-08)</div>
<div class="t" style="left:687.80px;top:459.82px;font-size:12.5px;line-height:12.5px;color:#8E939B;font-weight:400;letter-spacing:-0.501px;">XML#: 000000221</div>
<div class="b" style="left:836.00px;top:440.50px;width:50.60px;height:17.40px;background:#17A2D6;border-radius:3px;"></div>
<div class="t" style="left:835.89px;top:442.72px;font-size:12.5px;line-height:12.5px;color:#fff;font-weight:700;letter-spacing:0px;width:50.6px;text-align:center;letter-spacing:-0.212px;">68 / 0</div>
<div class="t" style="left:943.94px;top:442.52px;font-size:12.5px;line-height:12.5px;color:#1E1E1E;font-weight:700;letter-spacing:0px;width:100px;text-align:right;letter-spacing:-0.457px;">800,00$</div>
<div class="b" style="left:1051.90px;top:442.00px;width:48.50px;height:15.70px;background:#23786C;border-radius:3px;"></div>
<div class="t" style="left:1057.30px;top:443.34px;font-size:12px;line-height:12px;color:#fff;font-weight:700;letter-spacing:-1.253px;">Terminé</div>
<div class="b" style="left:3.40px;top:82.80px;width:24.30px;height:24.00px;border:1px solid #4E9C92;border-radius:50%;"></div>
<svg class="b" style="left:9.00px;top:88.50px;" width="13" height="13" viewBox="0 0 13 13"><path d="M1.5 11.5 L2.3 8.6 L9 1.9 L11.1 4 L4.4 10.7 Z" stroke="#3E8C84" stroke-width="0.9" fill="none" stroke-linejoin="round"/><path d="M7.8 3.1 L9.9 5.2" stroke="#3E8C84" stroke-width="0.9"/></svg>
<div class="b" style="left:33.80px;top:82.80px;width:23.90px;height:24.00px;border:1px solid #5D68A6;border-radius:50%;"></div>
<svg class="b" style="left:40.00px;top:89.00px;" width="12" height="12" viewBox="0 0 12 12"><rect x="1.6" y="1.6" width="6.5" height="6.5" rx="1" stroke="#8C94B8" stroke-width="0.9" fill="none"/><rect x="3.8" y="3.8" width="6.5" height="6.5" rx="1" stroke="#8C94B8" stroke-width="0.9" fill="#F0F0F0"/></svg>
<div class="b" style="left:63.10px;top:82.80px;width:24.10px;height:24.00px;border:1px solid #C95640;border-radius:50%;"></div>
<svg class="b" style="left:69.60px;top:88.50px;" width="11" height="12" viewBox="0 0 11 12"><path d="M1.2 2.5 H9.8" stroke="#C0281C" stroke-width="1.6"/><path d="M4 1 H7" stroke="#C0281C" stroke-width="1.2"/><path d="M2.2 3.6 H8.8 L8.2 11 H2.8 Z" fill="#F3C2A5" stroke="#D9543C" stroke-width="0.8"/><path d="M4.3 5 V9.8 M6.7 5 V9.8" stroke="#D58BB8" stroke-width="0.8"/></svg>
<div class="b" style="left:116.00px;top:70.60px;width:46.10px;height:23.10px;background:#1E5C55;border-radius:3px;"></div>
<div class="t" style="left:116.00px;top:76.41px;font-size:10.5px;line-height:10.5px;color:#fff;font-weight:400;letter-spacing:0px;width:46.1px;text-align:center;letter-spacing:-0.1px;-webkit-text-stroke:0.3px #fff;">Valider</div>
<svg class="b" style="left:149.50px;top:92.00px;" width="14" height="17" viewBox="0 0 14 17"><path d="M3.2 1.8 C3.2 0.6 5.2 0.6 5.2 1.8 V7 C5.2 6 7 6 7 7 V7.8 C7 6.8 8.8 6.8 8.8 7.8 V8.5 C8.8 7.5 10.6 7.5 10.6 8.5 V12 C10.6 14 9.5 15.8 7.5 15.8 H5.5 C4 15.8 3.3 15 2.5 13.8 L0.8 10.8 C0.3 9.8 1.5 9 2.3 9.8 L3.2 10.8 Z" fill="#fff" stroke="#222" stroke-width="0.9" stroke-linejoin="round"/><path d="M5.2 8.5 V12 M7 8.5 V12 M8.8 9 V12" stroke="#222" stroke-width="0.7"/></svg>
<div class="b" style="left:0.00px;top:54.00px;width:1139.50px;height:1.50px;background:#E2E2E4;"></div>
<div class="b" style="left:1141.50px;top:0.00px;width:9.00px;height:463.50px;background:#F1F1F3;"></div>
<div class="b" style="left:1142.90px;top:9.30px;width:6.60px;height:74.40px;background:#AAB2BB;"></div>
<svg class="b" style="left:1143.50px;top:3.00px;" width="5" height="3" viewBox="0 0 5 3"><path d="M0 3 L2.5 0 L5 3 Z" fill="#A3A7AE"/></svg>
<svg class="b" style="left:1143.50px;top:457.50px;" width="5" height="3" viewBox="0 0 5 3"><path d="M0 0 L2.5 3 L5 0 Z" fill="#A3A7AE"/></svg>
</div>
<div class="b" style="left:225.50px;top:724.70px;width:136.50px;height:22.80px;border:1px solid #E3E6EC;border-radius:3px;"></div>
<div class="b" style="left:249.00px;top:724.70px;width:1.00px;height:22.80px;background:#E3E6EC;"></div>
<div class="b" style="left:273.40px;top:724.70px;width:1.00px;height:22.80px;background:#E3E6EC;"></div>
<div class="b" style="left:293.80px;top:724.70px;width:1.00px;height:22.80px;background:#E3E6EC;"></div>
<div class="b" style="left:313.00px;top:724.70px;width:1.00px;height:22.80px;background:#E3E6EC;"></div>
<div class="b" style="left:337.00px;top:724.70px;width:1.00px;height:22.80px;background:#E3E6EC;"></div>
<div class="b" style="left:273.90px;top:724.70px;width:20.40px;height:22.80px;background:#353F7A;"></div>
<svg class="b" style="left:233.00px;top:731.00px;" width="10" height="10" viewBox="0 0 10 10"><path d="M5 1 L1.2 5 L5 9 M8.8 1 L5 5 L8.8 9" stroke="#9AA1BA" stroke-width="0.9" fill="none"/></svg>
<svg class="b" style="left:259.00px;top:731.00px;" width="6" height="10" viewBox="0 0 6 10"><path d="M5 1 L1 5 L5 9" stroke="#9AA1BA" stroke-width="0.9" fill="none"/></svg>
<div class="t" style="left:273.90px;top:730.89px;font-size:11px;line-height:11px;color:#fff;font-weight:400;letter-spacing:0px;width:20.4px;text-align:center;">1</div>
<div class="t" style="left:294.30px;top:730.89px;font-size:11px;line-height:11px;color:#4B5283;font-weight:400;letter-spacing:0px;width:19.2px;text-align:center;">2</div>
<svg class="b" style="left:322.50px;top:731.00px;" width="6" height="10" viewBox="0 0 6 10"><path d="M1 1 L5 5 L1 9" stroke="#4B5283" stroke-width="0.9" fill="none"/></svg>
<svg class="b" style="left:345.00px;top:731.00px;" width="10" height="10" viewBox="0 0 10 10"><path d="M1.2 1 L5 5 L1.2 9 M5 1 L8.8 5 L5 9" stroke="#7E86A8" stroke-width="0.9" fill="none"/></svg>
<div class="b" style="left:375.90px;top:723.90px;width:49.60px;height:23.20px;border:1px solid #E1E4EA;border-radius:3px;"></div>
<div class="t" style="left:387.00px;top:730.69px;font-size:11px;line-height:11px;color:#4B505C;font-weight:400;letter-spacing:-0.1px;">50</div>
<svg class="b" style="left:414.00px;top:733.00px;" width="8" height="5.5" viewBox="0 0 8 5.5"><path d="M0.9 0.9 L4 4.2 L7.1 0.9" stroke="#2F3440" stroke-width="1.5" fill="none"/></svg>
<div class="t" style="left:437.90px;top:729.52px;font-size:12.5px;line-height:12.5px;color:#333;font-weight:400;letter-spacing:-0.423px;">Affichage de 1 - 50 sur 65</div>
</body></html>
